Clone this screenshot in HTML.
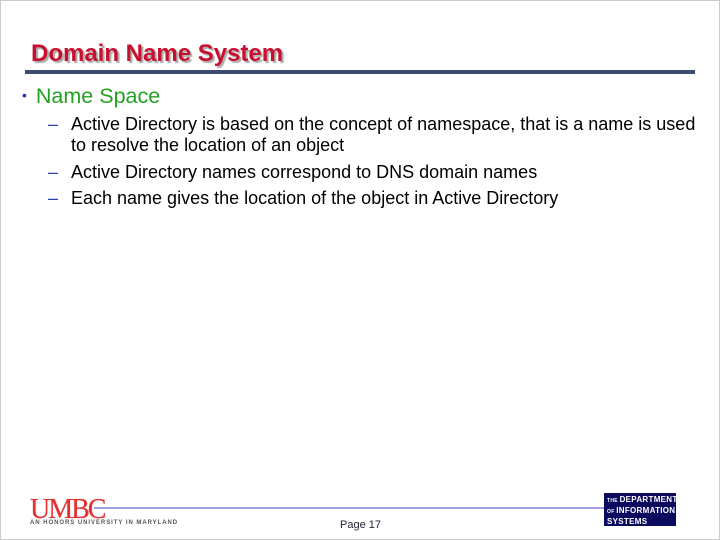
<!DOCTYPE html>
<html><head><style>
body{margin:0;width:720px;height:540px;background:#fff;position:relative;overflow:hidden;font-family:"Liberation Sans",Arial,sans-serif}
.frame{position:absolute;left:0;top:0;width:718px;height:538px;border:1px solid #ccc}
.t{position:absolute;left:31px;top:40px;font-size:24px;font-weight:bold;color:#c8102e;text-shadow:2px 2px 1px #aaa;letter-spacing:0px}
.rule{position:absolute;left:25px;top:70px;width:670px;height:4px;background:#3d4b6e}
.b{position:absolute;left:22px;top:84px;font-size:21.5px;color:#22a022}
.b span{color:#2233bb;font-size:14px;position:relative;top:-3px;margin-right:9px}
.s{position:absolute;left:48px;font-size:18px;color:#000;line-height:21px}
.s i{font-style:normal;position:absolute;left:0;color:#2a3fb0}
.s div{margin-left:23px}
.umbc{position:absolute;left:30px;top:494px;font-family:"Liberation Serif",serif;font-size:28px;color:#e03030;letter-spacing:-2px;text-shadow:0 0 1px #f99}
.line{position:absolute;left:94px;top:507px;width:512px;height:2px;background:#a0a0e0}
.tag{position:absolute;left:30px;top:520px;font-size:6px;font-weight:bold;color:#555;letter-spacing:0.95px;white-space:nowrap}
.pg{position:absolute;left:340px;top:519px;font-size:11px;color:#223}
.box{position:absolute;left:604px;top:493px;width:72px;height:33px;background:#0a0a5e;color:#fff;font-size:8px;font-weight:bold;line-height:10px;padding:2px 0 0 3px;box-sizing:border-box;letter-spacing:0.3px;white-space:nowrap;overflow:hidden}
.box span{font-size:5px}
</style></head><body>
<div class="frame"></div>
<div class="t">Domain Name System</div>
<div class="rule"></div>
<div class="b"><span>•</span>Name Space</div>
<div class="s" style="top:114px;width:690px"><i>–</i><div>Active Directory is based on the concept of namespace, that is a name is used<br>to resolve the location of an object</div></div>
<div class="s" style="top:162px;width:690px"><i>–</i><div>Active Directory names correspond to DNS domain names</div></div>
<div class="s" style="top:188px;width:690px"><i>–</i><div>Each name gives the location of the object in Active Directory</div></div>
<div class="umbc">UMBC</div>
<div class="line"></div>
<div class="tag">AN HONORS UNIVERSITY IN MARYLAND</div>
<div class="pg">Page 17</div>
<div class="box"><span>THE </span>DEPARTMENT<br><span>OF </span>INFORMATION<br>SYSTEMS</div>
</body></html>
